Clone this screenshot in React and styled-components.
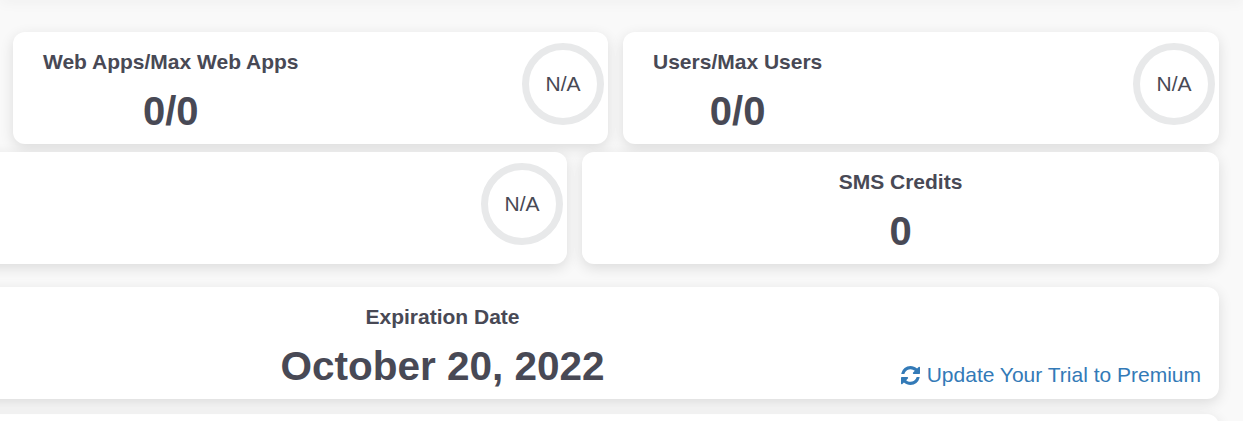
import React from "react";
import styled, { createGlobalStyle } from "styled-components";

const GlobalStyle = createGlobalStyle`
  html, body {
    margin: 0;
    height: 100%;
    overflow: hidden;
    background: #f9f9f9;
    font-family: "Liberation Sans", Arial, sans-serif;
  }
`;

const TopBar = styled.div`
  height: 4px;
  margin-top: -4px;
  box-shadow: 0 0 14px rgba(0, 0, 0, 0.1);
`;

const Page = styled.div`
  width: 1243px;
  height: 421px;
  overflow: hidden;
  box-sizing: border-box;
  padding: 32px 24px 0 0;
  display: flex;
  flex-direction: column;
  align-items: flex-end;
`;

const Row = styled.div`
  display: flex;
  gap: 15px;
  width: ${(p) => p.$width}px;
  margin-top: ${(p) => p.$top || 0}px;
  flex-shrink: 0;
`;

const Card = styled.div`
  flex: ${(p) => (p.$basis ? `0 0 ${p.$basis}px` : "1 1 0")};
  height: 112px;
  box-sizing: border-box;
  background: #fff;
  border-radius: 12px;
  box-shadow: 0 4px 14px rgba(0, 0, 0, 0.12);
  display: flex;
  justify-content: ${(p) => p.$justify || "space-between"};
  color: #484955;
`;

const Stat = styled.div`
  padding: 18px 0 0 30px;
  text-align: center;
`;

const CenterStat = styled.div`
  flex: 1;
  padding-top: 18px;
  text-align: center;
`;

const Title = styled.div`
  font-size: 21px;
  font-weight: 700;
  line-height: 24px;
`;

const Value = styled.div`
  font-size: 40px;
  font-weight: 700;
  line-height: 46px;
  margin-top: 14px;
`;

const Ring = styled.div`
  width: 82px;
  height: 82px;
  box-sizing: border-box;
  margin: 11px 4px 0 0;
  border: 7px solid #e8e9ea;
  border-radius: 50%;
  display: flex;
  align-items: center;
  justify-content: center;
  font-size: 21px;
  color: #484955;
`;

const DateStat = styled.div`
  width: 885px;
  margin-left: 28px;
  padding-top: 18px;
  text-align: center;
`;

const DateValue = styled(Value)`
  font-size: 40.5px;
  line-height: 50px;
  margin-top: 12px;
`;

const TrialLink = styled.a`
  position: absolute;
  right: 18px;
  bottom: 11px;
  display: flex;
  align-items: center;
  gap: 7px;
  font-size: 21px;
  line-height: 26px;
  color: #337ab7;
  text-decoration: none;
`;

const WideCard = styled(Card)`
  position: relative;
  justify-content: flex-start;
`;

function RefreshIcon() {
  return (
    <svg width="19" height="19" viewBox="0 0 1536 1536" fill="currentColor">
      <path d="M1511 928q0 5-1 7-64 268-268 434.5T764 1536q-146 0-282.500-55T238 1324l-129 129q-19 19-45 19t-45-19-19-45V960q0-26 19-45t45-19h448q26 0 45 19t19 45-19 45l-137 137q71 66 161 102t187 36q134 0 250-65t186-179q11-17 53-117 8-23 30-23h192q13 0 22.500 9.500t9.500 22.500zm25-800v448q0 26-19 45t-45 19h-448q-26 0-45-19t-19-45 19-45l138-138Q969 256 768 256q-134 0-250 65T332 500q-11 17-53 117-8 23-30 23H50q-13 0-22.500-9.500T18 608v-7q65-268 270-434.500T768 0q146 0 284 55.500T1297 212l130-129q19-19 45-19t45 19 19 45z" />
    </svg>
  );
}

export default function App() {
  return (
    <>
      <GlobalStyle />
      <TopBar />
      <Page>
        <Row $width={1206}>
          <Card $basis={595}>
            <Stat>
              <Title>Web Apps/Max Web Apps</Title>
              <Value>0/0</Value>
            </Stat>
            <Ring>N/A</Ring>
          </Card>
          <Card>
            <Stat>
              <Title>Users/Max Users</Title>
              <Value>0/0</Value>
            </Stat>
            <Ring>N/A</Ring>
          </Card>
        </Row>
        <Row $width={1247} $top={8}>
          <Card $basis={595} $justify="flex-end">
            <Ring>N/A</Ring>
          </Card>
          <Card>
            <CenterStat>
              <Title>SMS Credits</Title>
              <Value>0</Value>
            </CenterStat>
          </Card>
        </Row>
        <Row $width={1247} $top={23}>
          <WideCard>
            <DateStat>
              <Title>Expiration Date</Title>
              <DateValue>October 20, 2022</DateValue>
            </DateStat>
            <TrialLink href="#">
              <RefreshIcon />
              Update Your Trial to Premium
            </TrialLink>
          </WideCard>
        </Row>
        <Row $width={1247} $top={15}>
          <Card />
        </Row>
      </Page>
    </>
  );
}
